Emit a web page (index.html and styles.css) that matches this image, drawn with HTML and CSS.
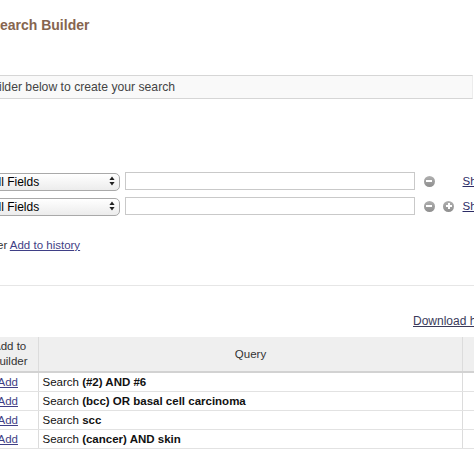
FILE: index.html
```html
<!DOCTYPE html>
<html lang="en">
<head>
    <meta charset="UTF-8">
    <meta name="viewport" content="width=device-width, initial-scale=1.0">
    <title>PubMed Advanced Search Builder</title>
    <link rel="stylesheet" href="styles.css">
</head>
<body>
    <div class="page">
        <h1 class="title">PubMed Advanced Search Builder</h1>

        <div class="intro">Use the builder below to create your search</div>

        <div class="builder">
            <div class="builder-row">
                <div class="field-select">
                    <select>
                        <option>All Fields</option>
                    </select>
                    <svg class="arrows" width="6" height="10" viewBox="0 0 6 10"><path d="M3 0.5 L5.6 4 H0.4 Z M3 9.5 L5.6 6 H0.4 Z" fill="#222"/></svg>
                </div>
                <input type="text" class="term">
                <span class="icon-btn minus"></span>
                <span class="icon-slot"></span>
                <a href="#" class="index-link">Show index list</a>
            </div>
            <div class="builder-row">
                <div class="field-select">
                    <select>
                        <option>All Fields</option>
                    </select>
                    <svg class="arrows" width="6" height="10" viewBox="0 0 6 10"><path d="M3 0.5 L5.6 4 H0.4 Z M3 9.5 L5.6 6 H0.4 Z" fill="#222"/></svg>
                </div>
                <input type="text" class="term">
                <span class="icon-btn minus"></span>
                <span class="icon-btn plus"></span>
                <a href="#" class="index-link">Show index list</a>
            </div>
        </div>

        <p class="history-line"><span>er</span> <a href="#">Add to history</a></p>

        <hr class="divider">

        <div class="history-actions">
            <a href="#">Download history</a>
        </div>

        <table class="history">
            <thead>
                <tr>
                    <th class="col-add">Add to<br>builder</th>
                    <th class="col-query">Query</th>
                    <th class="col-items">Items found</th>
                </tr>
            </thead>
            <tbody>
                <tr>
                    <td class="col-add"><a href="#">Add</a></td>
                    <td class="col-query">Search <b>(#2) AND #6</b></td>
                    <td class="col-items"></td>
                </tr>
                <tr>
                    <td class="col-add"><a href="#">Add</a></td>
                    <td class="col-query">Search <b>(bcc) OR basal cell carcinoma</b></td>
                    <td class="col-items"></td>
                </tr>
                <tr>
                    <td class="col-add"><a href="#">Add</a></td>
                    <td class="col-query">Search <b>scc</b></td>
                    <td class="col-items"></td>
                </tr>
                <tr>
                    <td class="col-add"><a href="#">Add</a></td>
                    <td class="col-query">Search <b>(cancer) AND skin</b></td>
                    <td class="col-items"></td>
                </tr>
            </tbody>
        </table>
    </div>
</body>
</html>
```

FILE: styles.css
```css
* {
    box-sizing: border-box;
}

body {
    margin: 0;
    overflow: hidden;
    background: #fff;
    color: #333;
    font-family: "Liberation Sans", Arial, Helvetica, sans-serif;
}

.page {
    width: 474px;
    padding-top: 17px;
}

a {
    color: #3f3f86;
}

.title {
    margin: 0 0 0 -138px;
    font-size: 14px;
    line-height: 16px;
    font-weight: bold;
    color: #86654f;
    white-space: nowrap;
}

.intro {
    margin: 42px 0 0 -70px;
    width: 543px;
    height: 24px;
    padding-left: 10px;
    background: #f9f9f9;
    border-top: 1px solid #d6d6d6;
    border-bottom: 1px solid #d6d6d6;
    border-right: 1px solid #ececec;
    font-size: 12.2px;
    line-height: 22px;
    color: #444;
    white-space: nowrap;
}

.builder {
    margin: 73px 0 0 -15px;
    display: flex;
    flex-direction: column;
    gap: 7px;
}

.builder-row {
    display: flex;
    align-items: center;
    height: 18px;
    white-space: nowrap;
}

.builder-row > * {
    flex-shrink: 0;
}

.field-select {
    position: relative;
    width: 135px;
    height: 18px;
}

.field-select select {
    appearance: none;
    -webkit-appearance: none;
    width: 100%;
    height: 18px;
    padding: 0 0 0 4.5px;
    border: 1px solid #a9a9a9;
    border-radius: 5px;
    background: linear-gradient(#ffffff, #ececec);
    font-family: inherit;
    font-size: 12px;
    color: #000;
}

.arrows {
    position: absolute;
    right: 5px;
    top: 4px;
}

.term {
    width: 290px;
    height: 18px;
    margin-left: 5px;
    border: 1px solid #c9c9c9;
    background: #fff;
}

.icon-btn, .icon-slot {
    width: 11px;
    height: 11px;
    margin-left: 8.5px;
}

.icon-btn {
    position: relative;
    border-radius: 50%;
    background: linear-gradient(#b0b0b0, #8e8e8e);
}

.icon-btn::before {
    content: "";
    position: absolute;
    left: 2.5px;
    top: 4.5px;
    width: 6px;
    height: 2px;
    background: #fff;
}

.icon-btn.plus::after {
    content: "";
    position: absolute;
    left: 4.5px;
    top: 2.5px;
    width: 2px;
    height: 6px;
    background: #fff;
}

.index-link {
    margin-left: 8.5px;
    font-size: 11.5px;
    color: #2c2c66;
}

.history-line {
    margin: 22px 0 0 -3px;
    font-size: 11.5px;
    line-height: 16px;
    color: #333;
    white-space: nowrap;
}

.divider {
    margin: 32px 0 0 0;
    border: none;
    border-top: 1px solid #e6e6e6;
    height: 0;
}

.history-actions {
    margin-top: 27px;
    padding-left: 413px;
    font-size: 12px;
    line-height: 16px;
    white-space: nowrap;
}

.history-actions a {
    color: #3a3a5a;
}

.history {
    margin: 8px 0 0 -10px;
    border-collapse: collapse;
    table-layout: fixed;
    width: 560px;
    font-size: 11.5px;
    color: #111;
}

.history th {
    height: 34px;
    padding: 2px 3px;
    background: #efefef;
    border-bottom: 2px solid #d2d2d2;
    font-weight: normal;
    line-height: 15px;
    color: #333;
    vertical-align: middle;
}

.history td {
    height: 19px;
    padding: 0 3.5px;
    border-bottom: 1px solid #e2e2e2;
    line-height: 18px;
    white-space: nowrap;
}

.history .col-add {
    width: 48.5px;
    text-align: left;
    border-right: 1px solid #dcdcdc;
}

.history td.col-add {
    padding-left: 7.5px;
}

.history .col-query {
    width: 424px;
}

.history th.col-query {
    text-align: center;
}

.history .col-items {
    width: 87.5px;
    border-left: 1px solid #dcdcdc;
}
```
